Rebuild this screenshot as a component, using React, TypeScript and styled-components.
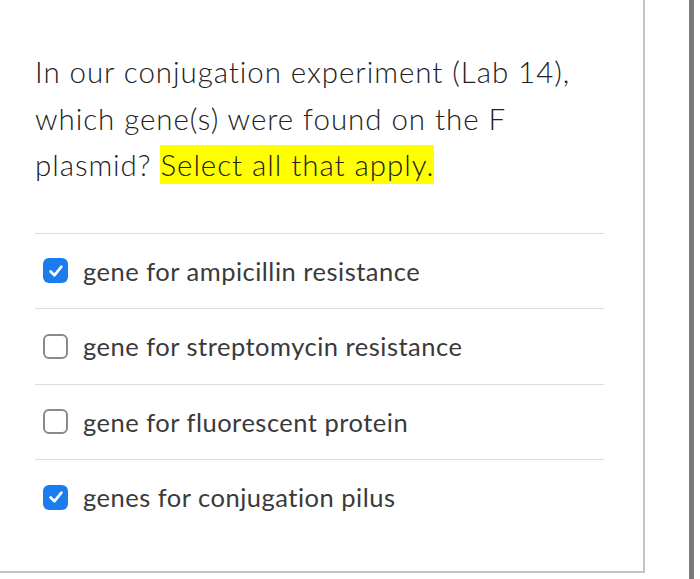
import React from 'react';
import styled, { createGlobalStyle } from 'styled-components';

const GlobalStyle = createGlobalStyle`
  html, body {
    margin: 0;
    padding: 0;
    background: #ffffff;
  }
  body {
    font-family: Lato, "Noto Sans", sans-serif;
    color: #2d3b45;
  }
`;

const Page = styled.div`
  display: flex;
  width: 700px;
  height: 579px;
  overflow: hidden;
`;

const Card = styled.div`
  box-sizing: border-box;
  width: 645px;
  height: 573px;
  border-right: 2px solid #c4c4c4;
  border-bottom: 2px solid #c4c4c4;
  padding: 49px 39px 0 35px;
`;

const Edge = styled.div`
  width: 5px;
  height: 100%;
  margin-left: 44px;
  background: #7a7a7a;
`;

const Question = styled.p`
  margin: 0 0 44px;
  font-size: 29.5px;
  font-weight: 300;
  letter-spacing: 0.95px;
  line-height: 46.5px;
  color: #222222;
`;

const Highlight = styled.span`
  background: #ffff00;
  padding: 2px 0;
`;

const Options = styled.ul`
  list-style: none;
  margin: 0;
  padding: 0;
`;

const Option = styled.li`
  display: flex;
  align-items: center;
  gap: 15px;
  height: 74.5px;
  padding-left: 8px;
  border-top: 1.5px solid #dcdcdc;
  font-size: 25.5px;
  letter-spacing: 0.5px;
  color: #3a3a3a;
`;

const Box = styled.span<{ $checked: boolean }>`
  box-sizing: border-box;
  flex: none;
  width: 25px;
  height: 25px;
  border-radius: 6px;
  display: flex;
  align-items: center;
  justify-content: center;
  background: ${({ $checked }) => ($checked ? '#1b7cf0' : '#ffffff')};
  border: ${({ $checked }) => ($checked ? 'none' : '2.5px solid #8a8a8a')};
`;

const Check = () => (
  <svg width="18" height="18" viewBox="0 0 16 16" aria-hidden="true">
    <path
      d="M3.2 8.4 L6.6 11.8 L12.8 4.2"
      fill="none"
      stroke="#ffffff"
      strokeWidth="2.4"
      strokeLinecap="round"
      strokeLinejoin="round"
    />
  </svg>
);

const options = [
  { label: 'gene for ampicillin resistance', checked: true },
  { label: 'gene for streptomycin resistance', checked: false },
  { label: 'gene for fluorescent protein', checked: false },
  { label: 'genes for conjugation pilus', checked: true },
];

const App: React.FC = () => {
  return (
    <>
      <GlobalStyle />
      <Page>
        <Card>
          <Question>
            In our conjugation experiment (Lab 14),
            <br />
            which gene(s) were found on the F
            <br />
            plasmid? <Highlight>Select all that apply.</Highlight>
          </Question>
          <Options>
            {options.map((o) => (
              <Option key={o.label}>
                <Box $checked={o.checked}>{o.checked && <Check />}</Box>
                <span>{o.label}</span>
              </Option>
            ))}
          </Options>
        </Card>
        <Edge />
      </Page>
    </>
  );
};

export default App;
